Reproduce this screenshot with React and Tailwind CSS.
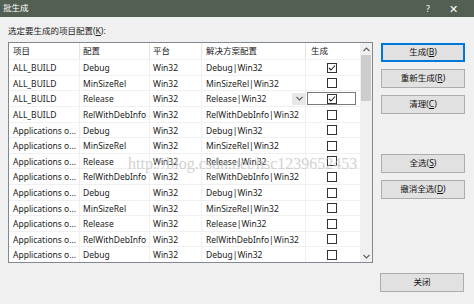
import React from "react";

const rows = [
  { p: "ALL_BUILD", c: "Debug", s: "Debug|Win32", on: true },
  { p: "ALL_BUILD", c: "MinSizeRel", s: "MinSizeRel|Win32" },
  { p: "ALL_BUILD", c: "Release", s: "Release|Win32", on: true, sel: true },
  { p: "ALL_BUILD", c: "RelWithDebInfo", s: "RelWithDebInfo|Win32" },
  { p: "Applications o...", c: "Debug", s: "Debug|Win32" },
  { p: "Applications o...", c: "MinSizeRel", s: "MinSizeRel|Win32" },
  { p: "Applications o...", c: "Release", s: "Release|Win32" },
  { p: "Applications o...", c: "RelWithDebInfo", s: "RelWithDebInfo|Win32" },
  { p: "Applications o...", c: "Debug", s: "Debug|Win32" },
  { p: "Applications o...", c: "MinSizeRel", s: "MinSizeRel|Win32" },
  { p: "Applications o...", c: "Release", s: "Release|Win32" },
  { p: "Applications o...", c: "RelWithDebInfo", s: "RelWithDebInfo|Win32" },
  { p: "Applications o...", c: "Debug", s: "Debug|Win32" },
];

const Check = ({ on }) => (
  <span className="w-[10px] h-[10px] border border-[#333] bg-white flex items-center justify-center">
    {on && (
      <svg width="8" height="8" viewBox="0 0 8 8">
        <path d="M1 4 L3 6 L7 1.5" stroke="#222" strokeWidth="1.1" fill="none" />
      </svg>
    )}
  </span>
);

const Btn = ({ children, primary }) => (
  <div
    className={`h-[19px] w-[84px] flex items-center justify-center bg-[#e1e1e1] text-[8.5px] text-[#111] ${
      primary
        ? "border border-[#0078d7] shadow-[inset_0_0_0_1px_#0078d7]"
        : "border border-[#adadad]"
    }`}
  >
    {children}
  </div>
);

const Chevron = ({ up }) => (
  <svg width="7" height="5" viewBox="0 0 7 5">
    <path
      d={up ? "M0.5 4 L3.5 1 L6.5 4" : "M0.5 1 L3.5 4 L6.5 1"}
      stroke="#606060"
      strokeWidth="1.1"
      fill="none"
    />
  </svg>
);

export default function App() {
  const cols = "grid grid-cols-[71px_70px_52px_104px_54px]";
  return (
    <div
      className="w-[474px] h-[304px] bg-[#f0f0f0] flex flex-col relative overflow-hidden text-[#1a1a1a]"
      style={{ fontFamily: '"Noto Sans", "Noto Sans CJK SC", sans-serif' }}
    >
      {/* title bar */}
      <div className="h-[17px] bg-[#535f52] flex items-center text-white">
        <span className="ml-[3px] text-[8.5px] leading-none">批生成</span>
        <span className="ml-auto text-[9px] leading-none mr-[19px]">?</span>
        <span className="text-[11px] leading-none mr-[16px]">✕</span>
      </div>

      <div className="h-[25px] pl-[8px] pt-[8px] text-[8.5px] leading-[12px]">
        选定要生成的项目配置(<span className="underline">K</span>):
      </div>

      <div className="flex pl-[8px]">
        {/* list */}
        <div className="w-[365px] h-[221px] border border-[#828790] bg-white flex overflow-hidden">
          <div className="flex flex-col">
            <div className={`${cols} h-[17px] text-[8.5px] leading-[16px]`}>
              <div className="pl-[4px] border-r border-[#e5e5e5]">项目</div>
              <div className="pl-[3px] border-r border-[#e5e5e5]">配置</div>
              <div className="pl-[3px] border-r border-[#e5e5e5]">平台</div>
              <div className="pl-[4px] border-r border-[#e5e5e5]">解决方案配置</div>
              <div className="pl-[5px]">生成</div>
            </div>
            {rows.map((r, i) => (
              <div
                key={i}
                className={`${cols} h-[15.6px] text-[8.5px] leading-[15px] border-t border-[#f0f0f0]`}
              >
                <div className="pl-[4px] border-r border-[#f0f0f0] whitespace-nowrap overflow-hidden">{r.p}</div>
                <div className="pl-[3px] border-r border-[#f0f0f0] whitespace-nowrap">{r.c}</div>
                <div className="pl-[3px] border-r border-[#f0f0f0]">Win32</div>
                <div className="pl-[4px] border-r border-[#f0f0f0] whitespace-nowrap flex items-center">
                  <span>{r.s}</span>
                  {r.sel && (
                    <span className="ml-auto mr-[-1px] w-[14px] h-[12px] bg-[#e8e8e8] flex items-center justify-center">
                      <Chevron />
                    </span>
                  )}
                </div>
                <div className="flex items-center justify-center">
                  {r.sel ? (
                    <div className="w-[49px] h-[13px] border border-[#7a7a7a] bg-white flex items-center justify-center ml-[-3px]">
                      <Check on={r.on} />
                    </div>
                  ) : (
                    <span className="ml-[-3px]">
                      <Check on={r.on} />
                    </span>
                  )}
                </div>
              </div>
            ))}
          </div>
          {/* scrollbar */}
          <div className="w-[12px] bg-[#f0f0f0] flex flex-col">
            <div className="h-[12px] flex items-center justify-center">
              <Chevron up />
            </div>
            <div className="mx-[1px] h-[46px] bg-[#cdcdcd]" />
            <div className="flex-1" />
            <div className="h-[12px] flex items-center justify-center">
              <Chevron />
            </div>
          </div>
        </div>

        {/* buttons */}
        <div className="ml-[8px] flex flex-col">
          <div className="mt-[1px]">
            <Btn primary>
              生成(<span className="underline">B</span>)
            </Btn>
          </div>
          <div className="mt-[7px]">
            <Btn>
              重新生成(<span className="underline">R</span>)
            </Btn>
          </div>
          <div className="mt-[7px]">
            <Btn>
              清理(<span className="underline">C</span>)
            </Btn>
          </div>
          <div className="mt-[40px]">
            <Btn>
              全选(<span className="underline">S</span>)
            </Btn>
          </div>
          <div className="mt-[7px]">
            <Btn>
              撤消全选(<span className="underline">D</span>)
            </Btn>
          </div>
        </div>
      </div>

      <div className="flex justify-end pr-[10px] mt-[10px]">
        <Btn>关闭</Btn>
      </div>

      {/* watermark */}
      <div
        className="absolute left-[128px] top-[152px] text-[16px] text-[#c4c4c4] opacity-75 pointer-events-none whitespace-nowrap"
        style={{ fontFamily: '"Liberation Serif", serif' }}
      >
        http://blog.csdn.net/hsc1239652453
      </div>
    </div>
  );
}
